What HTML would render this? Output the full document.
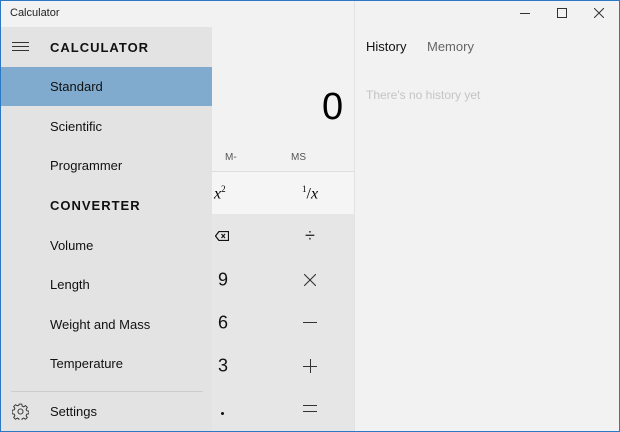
<!DOCTYPE html>
<html><head><style>
*{margin:0;padding:0;box-sizing:border-box}
body{width:620px;height:432px;overflow:hidden;background:#f2f2f2;font-family:"Liberation Sans",sans-serif;position:relative;color:#000}
.a{position:absolute}
.border{position:absolute;inset:0;border:1px solid #2b78c5;pointer-events:none;z-index:10}
.nav{left:1px;top:27px;width:211px;height:404px;background:#e3e3e3}
.item{position:absolute;left:49px;font-size:13px;color:#111}
.hd{position:absolute;left:49px;font-size:13px;font-weight:bold;letter-spacing:1px;color:#111}
.b{position:absolute;font-size:18px;color:#111;transform:translate(-50%,-50%)}
</style></head><body>
<div class="a" style="left:10px;top:7px;font-size:11px;color:#222">Calculator</div>
<div class="a" style="left:520px;top:13px;width:10px;height:1px;background:#333"></div>
<div class="a" style="left:557px;top:8px;width:10px;height:10px;border:1px solid #333"></div>
<svg class="a" style="left:594px;top:8px" width="10" height="10"><path d="M0 0L10 10M10 0L0 10" stroke="#333" stroke-width="1"/></svg>
<!-- calc area -->
<div class="a" style="left:212px;top:171px;width:142px;height:1px;background:#ddd"></div>
<div class="a" style="left:212px;top:172px;width:142px;height:42px;background:#f5f5f5"></div>
<div class="a" style="left:212px;top:214px;width:142px;height:217px;background:#e6e6e6"></div>
<div class="a" style="left:354px;top:1px;width:1px;height:430px;background:#e2e2e2"></div>
<div class="a" style="left:322px;top:86px;font-size:38px;color:#000">0</div>
<div class="a" style="left:225px;top:152px;font-size:10px;color:#555">M-</div>
<div class="a" style="left:291px;top:152px;font-size:10px;color:#555">MS</div>
<div class="a" style="left:214px;top:184px;font-size:16px;font-style:italic;font-family:'Liberation Serif',serif">x<sup style="font-size:9px;font-style:normal">2</sup></div>
<div class="a" style="left:302px;top:184px;font-size:16px;font-family:'Liberation Serif',serif"><sup style="font-size:9px">1</sup>/<i>x</i></div>
<svg class="a" style="left:215px;top:231px" width="14" height="10"><path d="M4 0.5H13.5V9.5H4L0.5 5Z" fill="none" stroke="#111" stroke-width="1.2"/><path d="M6.5 3L10 7M10 3L6.5 7" stroke="#111" stroke-width="1.2"/></svg>
<div class="b" style="left:310px;top:236px;font-size:18px;color:#333">÷</div>
<div class="b" style="left:223px;top:280px">9</div>
<svg class="a" style="left:304px;top:274px" width="12" height="12"><path d="M0 0L12 12M12 0L0 12" stroke="#333" stroke-width="1.1"/></svg>
<div class="b" style="left:223px;top:323px">6</div>
<div class="a" style="left:303px;top:322px;width:14px;height:1px;background:#333"></div>
<div class="b" style="left:223px;top:366px">3</div>
<div class="a" style="left:303px;top:366px;width:14px;height:1px;background:#333"></div>
<div class="a" style="left:310px;top:359px;width:1px;height:14px;background:#333"></div>
<div class="a" style="left:221px;top:412px;width:3px;height:3px;background:#111;border-radius:50%"></div>
<div class="a" style="left:303px;top:405px;width:14px;height:1px;background:#333"></div>
<div class="a" style="left:303px;top:411px;width:14px;height:1px;background:#333"></div>
<!-- right pane -->
<div class="a" style="left:366px;top:39px;font-size:13px;color:#111">History</div>
<div class="a" style="left:427px;top:39px;font-size:13px;color:#666">Memory</div>
<div class="a" style="left:366px;top:88px;font-size:12px;color:#c4c4c4">There's no history yet</div>
<!-- nav -->
<div class="a nav">
 <div class="a" style="left:11px;top:15px;width:17px;height:1px;background:#333"></div>
 <div class="a" style="left:11px;top:19px;width:17px;height:1px;background:#333"></div>
 <div class="a" style="left:11px;top:23px;width:17px;height:1px;background:#333"></div>
 <div class="hd" style="top:13px">CALCULATOR</div>
 <div class="a" style="left:0;top:40px;width:211px;height:39px;background:#80aace"></div>
 <div class="item" style="top:52px">Standard</div>
 <div class="item" style="top:92px">Scientific</div>
 <div class="item" style="top:131px">Programmer</div>
 <div class="hd" style="top:171px">CONVERTER</div>
 <div class="item" style="top:211px">Volume</div>
 <div class="item" style="top:250px">Length</div>
 <div class="item" style="top:290px">Weight and Mass</div>
 <div class="item" style="top:329px">Temperature</div>
 <div class="a" style="left:10px;top:364px;width:192px;height:1px;background:#ccc"></div>
 <svg class="a" style="left:11px;top:376px" width="17" height="17" viewBox="0 0 16 16"><path d="M6.8 1h2.4l.4 2 1.4.6 1.7-1.1 1.7 1.7-1.1 1.7.6 1.4 2 .4v2.4l-2 .4-.6 1.4 1.1 1.7-1.7 1.7-1.7-1.1-1.4.6-.4 2H6.8l-.4-2-1.4-.6-1.7 1.1-1.7-1.7 1.1-1.7-.6-1.4-2-.4V6.8l2-.4.6-1.4-1.1-1.7 1.7-1.7 1.7 1.1 1.4-.6z" fill="none" stroke="#333" stroke-width=".9"/><circle cx="8" cy="8" r="2.4" fill="none" stroke="#333" stroke-width=".9"/></svg>
 <div class="item" style="top:377px">Settings</div>
</div>
<div class="border"></div>
</body></html>
